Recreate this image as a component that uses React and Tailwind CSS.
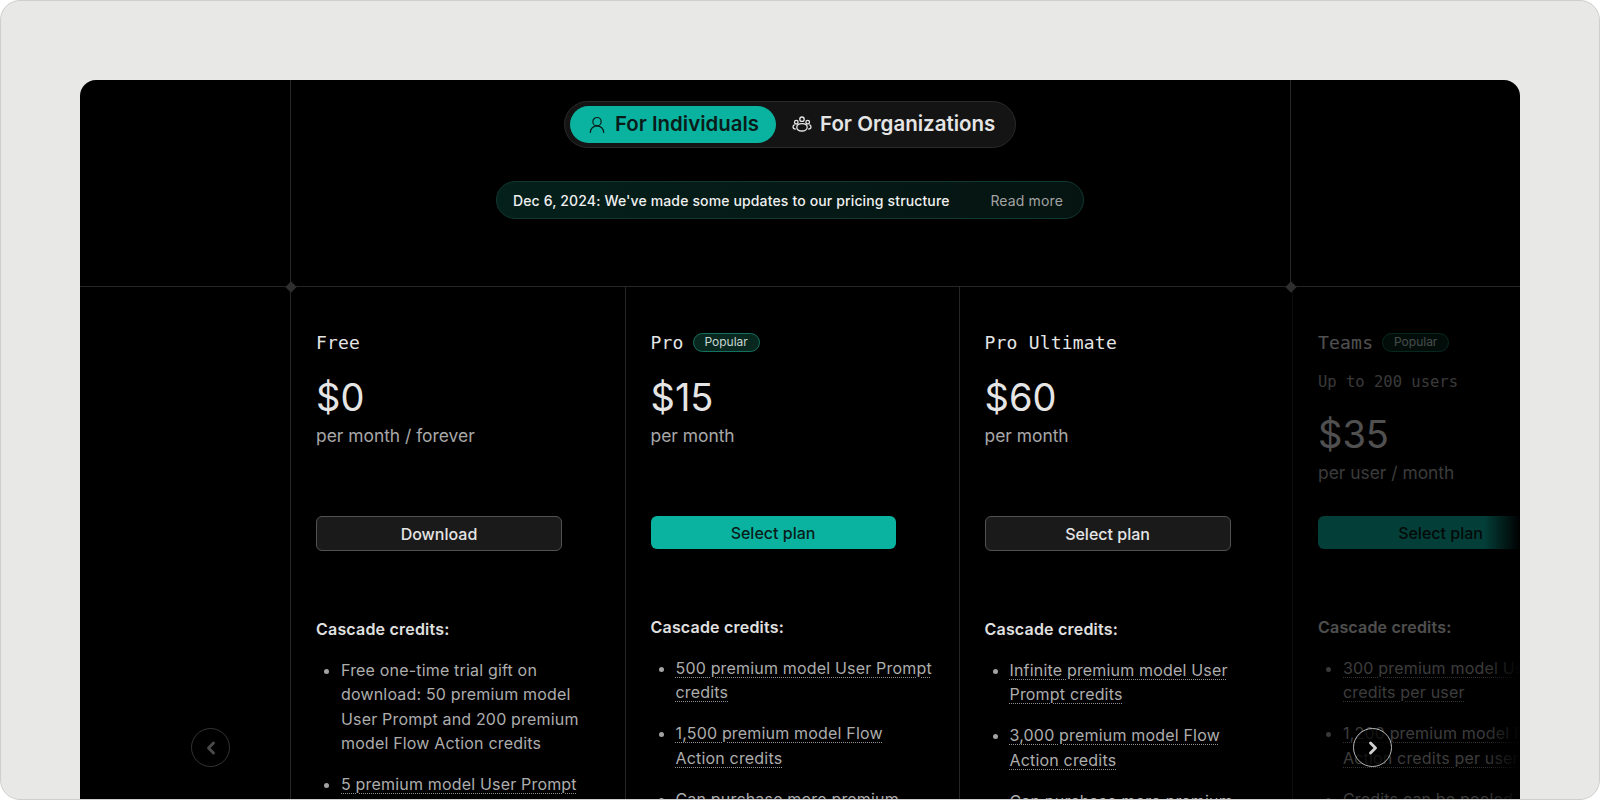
import React from 'react';
import { ChevronLeft, ChevronRight, UserRound } from 'lucide-react';

const INTER = "font-['Inter','Liberation_Sans',sans-serif]";
const MONO = "font-['DejaVu_Sans_Mono','Liberation_Mono',monospace]";

function GroupIcon() {
  return (
    <svg width="20" height="20" viewBox="0 0 20 20" fill="none" stroke="currentColor" strokeWidth="1.3">
      <circle cx="10" cy="4.2" r="2.2" />
      <circle cx="4.3" cy="7.2" r="1.8" />
      <circle cx="15.7" cy="7.2" r="1.8" />
      <path d="M2.6 9.6C1.6 10.2 1 11 1 12c0 1.2 1.2 2 2.8 2.2" />
      <path d="M17.4 9.6c1 .6 1.6 1.4 1.6 2.4 0 1.2-1.2 2-2.8 2.2" />
      <path d="M10 8.6c-3 0-5.2 1.5-5.2 3.6 0 2.2 2.2 3.8 5.2 3.8s5.2-1.6 5.2-3.8c0-2.1-2.2-3.6-5.2-3.6Z" />
    </svg>
  );
}

function Badge() {
  return (
    <span className={`-mt-[2px] ml-[9px] flex h-[19px] w-[67px] items-center justify-center rounded-full border border-[#14715f] bg-[#07271f] text-xs tracking-normal text-[#c9d6d2] ${INTER}`}>
      Popular
    </span>
  );
}

function Feature({ text, dotted }) {
  return (
    <li className="mb-[16.5px] w-[258px] marker:text-[#a3a3a3]">
      <span className={dotted ? 'underline decoration-[#8f8f8f] decoration-dotted decoration-1 underline-offset-[3px]' : ''}>{text}</span>
    </li>
  );
}

function PlanColumn({ name, popular, subtitle, price, per, button, primary, features, className }) {
  return (
    <div className={`shrink-0 border-l border-[#262626] ${className}`}>
      <div className="h-[229px] pt-[44px]">
        <div className={`flex h-6 items-center text-lg leading-6 tracking-[0.2px] text-[#e5e5e5] ${MONO}`}>
          {name}
          {popular && <Badge />}
        </div>
        {subtitle && (
          <div className={`mt-[15px] text-[15.5px] leading-6 text-[#a3a3a3] ${MONO}`}>{subtitle}</div>
        )}
        <div className={`text-[38px] leading-10 text-[#e5e5e5] ${subtitle ? 'mt-[20px]' : 'mt-[22px]'}`}>{price}</div>
        <div className="mt-[5px] text-[17.4px] leading-7 text-[#a8a8a8]">{per}</div>
      </div>
      <button
        className={
          primary
            ? 'block h-[33px] w-[245px] rounded-md bg-[#0ab3a0] text-base font-medium text-[#0a1c19]'
            : 'block h-[35px] w-[246px] rounded-md border border-[#525252] bg-[#1a1a1a] pt-px text-base font-medium text-[#e5e5e5]'
        }
      >
        {button}
      </button>
      <div className="mt-[66px] text-base leading-6 font-semibold tracking-[0.2px] text-[#e0e0e0]">Cascade credits:</div>
      <ul className="mt-[16.5px] list-disc pl-[25px] text-base leading-[24.5px] tracking-[0.18px] text-[#adadad]">
        {features.map((f) => (
          <Feature key={f.text} text={f.text} dotted={f.dotted} />
        ))}
      </ul>
    </div>
  );
}

export default function App() {
  return (
    <div className={`h-[800px] w-[1600px] overflow-hidden rounded-[20px] border border-[#cfcfcf] bg-[#e8e8e6] pt-[79px] pl-[79px] ${INTER}`}>
      <div className="relative h-[721px] w-[1440px] overflow-hidden rounded-t-2xl bg-black">
        {/* top area with the toggle */}
        <div className="flex h-[207px] border-b border-[#262626]">
          <div className="w-[210px] shrink-0" />
          <div className="flex w-[1001px] shrink-0 flex-col items-center border-x border-[#262626] pt-[21px] pr-px">
            <div className="flex h-[47px] w-[452px] items-center rounded-full border border-[#2a2a2a] bg-[#141414] pl-[5px]">
              <div className="flex h-[37px] w-[206px] items-center gap-2 rounded-full bg-[#0ab3a0] pl-[17px] text-[20.4px] font-semibold text-[#0a1c19]">
                <UserRound size={20} strokeWidth={1.4} />
                For Individuals
              </div>
              <div className="ml-[16px] flex items-center gap-2 text-[20.5px] font-semibold text-[#e5e5e5]">
                <GroupIcon />
                For Organizations
              </div>
            </div>
            <div className="mt-[33px] flex h-[38px] w-[588px] items-center justify-between rounded-full border border-[#12382f] bg-gradient-to-r from-[#04201b] to-[#051411] pt-px pr-5 pl-4 text-sm tracking-[0.14px]">
              <span className="font-medium text-[#f0f0f0]">Dec 6, 2024: We've made some updates to our pricing structure</span>
              <span className="text-[#a3a3a3]">Read more</span>
            </div>
          </div>
        </div>

        {/* plans */}
        <div className="flex h-[514px]">
          <div className="w-[210px] shrink-0" />
          <PlanColumn
            className="w-[335px] pl-[25px]"
            name="Free"
            price="$0"
            per="per month / forever"
            button="Download"
            features={[
              { text: 'Free one-time trial gift on download: 50 premium model User Prompt and 200 premium model Flow Action credits' },
              { text: '5 premium model User Prompt credits', dotted: true },
            ]}
          />
          <PlanColumn
            className="w-[334px] pl-[24.5px]"
            name="Pro"
            popular
            price="$15"
            per="per month"
            button="Select plan"
            primary
            features={[
              { text: '500 premium model User Prompt credits', dotted: true },
              { text: '1,500 premium model Flow Action credits', dotted: true },
              { text: 'Can purchase more premium model credits' },
            ]}
          />
          <PlanColumn
            className="w-[333px] pl-[24.5px]"
            name="Pro Ultimate"
            price="$60"
            per="per month"
            button="Select plan"
            features={[
              { text: 'Infinite premium model User Prompt credits', dotted: true },
              { text: '3,000 premium model Flow Action credits', dotted: true },
              { text: 'Can purchase more premium model credits' },
            ]}
          />
          <PlanColumn
            className="w-[334px] pl-[25px] opacity-[0.35]"
            name="Teams"
            popular
            subtitle="Up to 200 users"
            price="$35"
            per="per user / month"
            button="Select plan"
            primary
            features={[
              { text: '300 premium model User Prompt credits per user', dotted: true },
              { text: '1,200 premium model Flow Action credits per user', dotted: true },
              { text: 'Credits can be pooled' },
            ]}
          />
        </div>

        {/* grid crossings */}
        <div className="absolute top-[202.5px] left-[206.5px] h-2 w-2 rotate-45 bg-[#2e2e2e]" />
        <div className="absolute top-[202.5px] left-[1206.5px] h-2 w-2 rotate-45 bg-[#2e2e2e]" />

        {/* right edge fade */}
        <div className="absolute top-[207px] right-0 bottom-0 w-[36px] bg-gradient-to-r from-transparent to-black" />

        {/* carousel arrows */}
        <button className="absolute top-[648px] left-[111px] flex h-[39px] w-[39px] items-center justify-center rounded-full border border-[#333333] bg-black text-[#4a4a4a]">
          <ChevronLeft size={20} strokeWidth={3.5} />
        </button>
        <button className="absolute top-[648px] left-[1273px] flex h-[39px] w-[39px] items-center justify-center rounded-full border border-[#b5b5b5] bg-black/70 text-[#d0d0d0]">
          <ChevronRight size={20} strokeWidth={3.5} />
        </button>
      </div>
    </div>
  );
}
